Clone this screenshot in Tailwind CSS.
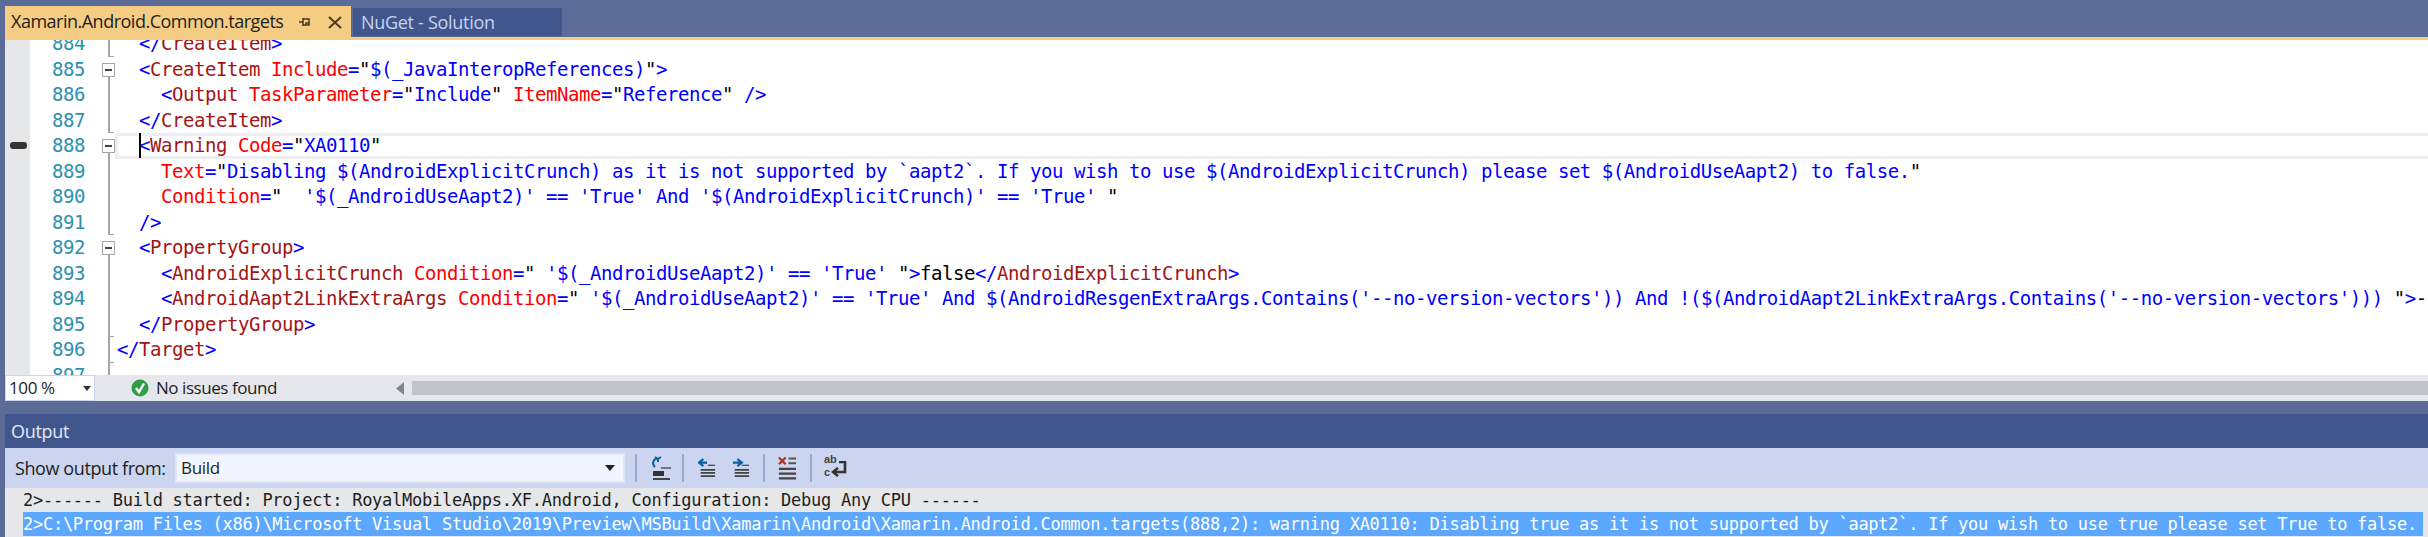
<!DOCTYPE html>
<html lang="en">
<head>
<meta charset="UTF-8">
<title>Xamarin.Android.Common.targets</title>
<script src="https://cdn.jsdelivr.net/npm/@tailwindcss/browser@4"></script>
</head>
<body class="bg-[#5d6b99]">
<div class="w-[2428px] h-[537px] overflow-hidden flex flex-col pl-[5px] font-['Open_Sans',sans-serif]">

  <!-- Tab well -->
  <div class="h-[37px] flex items-end shrink-0">
    <div class="w-[346px] h-[31px] bg-[#f5cc84] flex items-center pl-[6px] text-[18px] text-[#1e1e1e] tracking-[-0.5px] relative">
      <span>Xamarin.Android.Common.targets</span>
      <svg class="absolute left-[294px] top-[10px]" width="13" height="12" viewBox="0 0 13 12" fill="none" stroke="#4a3c1c" stroke-width="1.5">
        <path d="M0 6H4M4 2V10M4 3H10V9H4M7 9V7H10"/>
      </svg>
      <svg class="absolute left-[323px] top-[10px]" width="14" height="13" viewBox="0 0 14 13" stroke="#4a3c1c" stroke-width="2">
        <path d="M1 1L13 12M13 1L1 12"/>
      </svg>
    </div>
    <div class="ml-[2px] mb-px w-[209px] h-[28px] bg-[#40568d] flex items-center pl-[8px] text-[18px] text-[#c8d3ee] tracking-[-0.3px]">NuGet - Solution</div>
  </div>
  <div class="h-[3px] bg-[#f5cc84] shrink-0"></div>

  <!-- Editor -->
  <div class="h-[335px] bg-white overflow-hidden shrink-0 font-['DejaVu_Sans_Mono',monospace] text-[19px] tracking-[-0.44px]">
    <div class="mt-[-9px]">
      <div class="flex h-[25.5px] leading-[25.5px]">
        <div class="w-[25px] bg-[#e6e7e8]"></div><div class="w-[55px] text-right text-[#2b91af]">884</div>
        <div class="w-[32px]"><div class="ml-[23px] w-[6px] h-full border-l-2 border-b border-[#a5a5a5]"></div></div>
        <div class="whitespace-pre text-[#0000ff]">  &lt;/<span class="text-[#a31515]">CreateItem</span>&gt;</div>
      </div>
      <div class="flex h-[25.5px] leading-[25.5px]">
        <div class="w-[25px] bg-[#e6e7e8]"></div><div class="w-[55px] text-right text-[#2b91af]">885</div>
        <div class="w-[32px] flex flex-col"><div class="ml-[17px] mt-[6px] w-[13px] h-[14px] border border-[#a5a5a5] flex items-center justify-center"><div class="w-[7px] h-[2px] bg-[#444444]"></div></div><div class="ml-[23px] w-[2px] flex-1 bg-[#a5a5a5]"></div></div>
        <div class="whitespace-pre text-[#0000ff]">  &lt;<span class="text-[#a31515]">CreateItem</span> <span class="text-[#ff0000]">Include</span>=<span class="text-black">"</span>$(_JavaInteropReferences)<span class="text-black">"</span>&gt;</div>
      </div>
      <div class="flex h-[25.5px] leading-[25.5px]">
        <div class="w-[25px] bg-[#e6e7e8]"></div><div class="w-[55px] text-right text-[#2b91af]">886</div>
        <div class="w-[32px]"><div class="ml-[23px] w-[2px] h-full bg-[#a5a5a5]"></div></div>
        <div class="whitespace-pre text-[#0000ff]">    &lt;<span class="text-[#a31515]">Output</span> <span class="text-[#ff0000]">TaskParameter</span>=<span class="text-black">"</span>Include<span class="text-black">"</span> <span class="text-[#ff0000]">ItemName</span>=<span class="text-black">"</span>Reference<span class="text-black">"</span> /&gt;</div>
      </div>
      <div class="flex h-[25.5px] leading-[25.5px]">
        <div class="w-[25px] bg-[#e6e7e8]"></div><div class="w-[55px] text-right text-[#2b91af]">887</div>
        <div class="w-[32px]"><div class="ml-[23px] w-[6px] h-full border-l-2 border-b border-[#a5a5a5]"></div></div>
        <div class="whitespace-pre text-[#0000ff]">  &lt;/<span class="text-[#a31515]">CreateItem</span>&gt;</div>
      </div>
      <div class="flex h-[25.5px] leading-[25.5px] relative">
        <div class="w-[25px] bg-[#e6e7e8] flex items-center pl-[5px]"><div class="w-[17px] h-[7px] rounded-[3px] bg-[#333333]"></div></div><div class="w-[55px] text-right text-[#2b91af]">888</div>
        <div class="w-[32px] flex flex-col"><div class="ml-[17px] mt-[6px] w-[13px] h-[14px] border border-[#a5a5a5] flex items-center justify-center"><div class="w-[7px] h-[2px] bg-[#444444]"></div></div><div class="ml-[23px] w-[2px] flex-1 bg-[#a5a5a5]"></div></div>
        <div class="whitespace-pre text-[#0000ff]">  &lt;<span class="text-[#a31515]">Warning</span> <span class="text-[#ff0000]">Code</span>=<span class="text-black">"</span>XA0110<span class="text-black">"</span></div>
        <div class="absolute left-[110px] right-0 top-0 h-[26px] border-y-[3px] border-l-[3px] border-[#eeeef2]"></div>
        <div class="absolute left-[134px] top-0 h-[25px] w-[2px] bg-black"></div>
      </div>
      <div class="flex h-[25.5px] leading-[25.5px]">
        <div class="w-[25px] bg-[#e6e7e8]"></div><div class="w-[55px] text-right text-[#2b91af]">889</div>
        <div class="w-[32px]"><div class="ml-[23px] w-[2px] h-full bg-[#a5a5a5]"></div></div>
        <div class="whitespace-pre text-[#0000ff]">    <span class="text-[#ff0000]">Text</span>=<span class="text-black">"</span>Disabling $(AndroidExplicitCrunch) as it is not supported by `aapt2`. If you wish to use $(AndroidExplicitCrunch) please set $(AndroidUseAapt2) to false.<span class="text-black">"</span></div>
      </div>
      <div class="flex h-[25.5px] leading-[25.5px]">
        <div class="w-[25px] bg-[#e6e7e8]"></div><div class="w-[55px] text-right text-[#2b91af]">890</div>
        <div class="w-[32px]"><div class="ml-[23px] w-[2px] h-full bg-[#a5a5a5]"></div></div>
        <div class="whitespace-pre text-[#0000ff]">    <span class="text-[#ff0000]">Condition</span>=<span class="text-black">"</span>  '$(_AndroidUseAapt2)' == 'True' And '$(AndroidExplicitCrunch)' == 'True' <span class="text-black">"</span></div>
      </div>
      <div class="flex h-[25.5px] leading-[25.5px]">
        <div class="w-[25px] bg-[#e6e7e8]"></div><div class="w-[55px] text-right text-[#2b91af]">891</div>
        <div class="w-[32px]"><div class="ml-[23px] w-[6px] h-full border-l-2 border-b border-[#a5a5a5]"></div></div>
        <div class="whitespace-pre text-[#0000ff]">  /&gt;</div>
      </div>
      <div class="flex h-[25.5px] leading-[25.5px]">
        <div class="w-[25px] bg-[#e6e7e8]"></div><div class="w-[55px] text-right text-[#2b91af]">892</div>
        <div class="w-[32px] flex flex-col"><div class="ml-[17px] mt-[6px] w-[13px] h-[14px] border border-[#a5a5a5] flex items-center justify-center"><div class="w-[7px] h-[2px] bg-[#444444]"></div></div><div class="ml-[23px] w-[2px] flex-1 bg-[#a5a5a5]"></div></div>
        <div class="whitespace-pre text-[#0000ff]">  &lt;<span class="text-[#a31515]">PropertyGroup</span>&gt;</div>
      </div>
      <div class="flex h-[25.5px] leading-[25.5px]">
        <div class="w-[25px] bg-[#e6e7e8]"></div><div class="w-[55px] text-right text-[#2b91af]">893</div>
        <div class="w-[32px]"><div class="ml-[23px] w-[2px] h-full bg-[#a5a5a5]"></div></div>
        <div class="whitespace-pre text-[#0000ff]">    &lt;<span class="text-[#a31515]">AndroidExplicitCrunch</span> <span class="text-[#ff0000]">Condition</span>=<span class="text-black">"</span> '$(_AndroidUseAapt2)' == 'True' <span class="text-black">"</span>&gt;<span class="text-black">false</span>&lt;/<span class="text-[#a31515]">AndroidExplicitCrunch</span>&gt;</div>
      </div>
      <div class="flex h-[25.5px] leading-[25.5px]">
        <div class="w-[25px] bg-[#e6e7e8]"></div><div class="w-[55px] text-right text-[#2b91af]">894</div>
        <div class="w-[32px]"><div class="ml-[23px] w-[2px] h-full bg-[#a5a5a5]"></div></div>
        <div class="whitespace-pre text-[#0000ff]">    &lt;<span class="text-[#a31515]">AndroidAapt2LinkExtraArgs</span> <span class="text-[#ff0000]">Condition</span>=<span class="text-black">"</span> '$(_AndroidUseAapt2)' == 'True' And $(AndroidResgenExtraArgs.Contains('--no-version-vectors')) And !($(AndroidAapt2LinkExtraArgs.Contains('--no-version-vectors'))) <span class="text-black">"</span>&gt;<span class="text-black">-</span></div>
      </div>
      <div class="flex h-[25.5px] leading-[25.5px]">
        <div class="w-[25px] bg-[#e6e7e8]"></div><div class="w-[55px] text-right text-[#2b91af]">895</div>
        <div class="w-[32px]"><div class="ml-[23px] w-[6px] h-full border-l-2 border-b border-[#a5a5a5]"></div></div>
        <div class="whitespace-pre text-[#0000ff]">  &lt;/<span class="text-[#a31515]">PropertyGroup</span>&gt;</div>
      </div>
      <div class="flex h-[25.5px] leading-[25.5px]">
        <div class="w-[25px] bg-[#e6e7e8]"></div><div class="w-[55px] text-right text-[#2b91af]">896</div>
        <div class="w-[32px]"><div class="ml-[23px] w-[6px] h-full border-l-2 border-b border-[#a5a5a5]"></div></div>
        <div class="whitespace-pre text-[#0000ff]">&lt;/<span class="text-[#a31515]">Target</span>&gt;</div>
      </div>
      <div class="flex h-[25.5px] leading-[25.5px]">
        <div class="w-[25px] bg-[#e6e7e8]"></div><div class="w-[55px] text-right text-[#2b91af]">897</div>
        <div class="w-[32px]"><div class="ml-[23px] w-[2px] h-full bg-[#a5a5a5]"></div></div>
      </div>
    </div>
  </div>

  <!-- Editor status bar -->
  <div class="h-[26px] bg-[#e6e7ed] flex items-center shrink-0">
    <div class="w-[90px] h-full bg-white border border-[#ccd5f0] flex items-center pl-[3px] text-[17px] text-[#1e1e1e] tracking-[-0.4px]">
      <span>100 %</span>
      <svg class="ml-[28px]" width="8" height="5" viewBox="0 0 8 5" fill="#333333"><path d="M0 0H8L4 5Z"/></svg>
    </div>
    <svg class="ml-[36px]" width="18" height="18" viewBox="0 0 18 18">
      <circle cx="9" cy="9" r="8.5" fill="#2f9e44"/>
      <path d="M5 9L8 13L13 4.5" fill="none" stroke="white" stroke-width="2.4"/>
    </svg>
    <span class="ml-[7px] text-[17px] text-[#1e1e1e] tracking-[-0.45px]">No issues found</span>
    <svg class="ml-[119px]" width="8" height="13" viewBox="0 0 8 13" fill="#85858c"><path d="M8 0V13L0 6.5Z"/></svg>
    <div class="ml-[8px] flex-1 h-[14px] bg-[#c2c3c9]"></div>
  </div>

  <div class="h-[13px] shrink-0"></div>

  <!-- Output panel -->
  <div class="h-[34px] bg-[#40568d] flex items-center pl-[6px] text-[18px] text-[#e4e9f6] tracking-[-0.3px] shrink-0">Output</div>

  <div class="h-[40px] bg-[#ccd5f0] flex items-center pl-[10px] shrink-0">
    <span class="w-[160px] text-[18px] text-[#1e1e1e] tracking-[-0.4px]">Show output from:</span>
    <div class="w-[450px] h-[30px] bg-[#f2f5fd] border-2 border-[#dde5fb] flex items-center pl-[4px] text-[17px] text-[#1e1e1e] tracking-[-0.3px]">
      <span class="flex-1">Build</span>
      <svg class="mr-[8px]" width="10" height="6" viewBox="0 0 10 6" fill="#222222"><path d="M0 0H10L5 6Z"/></svg>
    </div>
    <div class="ml-[10px] w-[2px] h-[28px] bg-[#9aaad0]"></div>
    <svg class="ml-[13px]" width="22" height="24" viewBox="0 0 22 24" fill="none">
      <path d="M5 11C1 7 4 2 8 3L8 6M8 3L5 1M8 3L11 1" stroke="#0a5fa3" stroke-width="2"/>
      <path d="M11 12H21" stroke="#555555" stroke-width="1.5"/>
      <path d="M3 15H14V20H3Z" fill="#333333"/>
      <path d="M3 23H20" stroke="#444444" stroke-width="2"/>
    </svg>
    <div class="ml-[10px] w-[2px] h-[28px] bg-[#9aaad0]"></div>
    <svg class="ml-[14px]" width="18" height="20" viewBox="0 0 20 20" fill="none">
      <path d="M10 4H2M6 0L1 4L6 8" stroke="#0a5fa3" stroke-width="2.4"/>
      <path d="M11 7H19" stroke="#555555" stroke-width="1.5"/>
      <path d="M3 12H19M3 15.5H19M3 19H19" stroke="#444444" stroke-width="2"/>
    </svg>
    <svg class="ml-[16px]" width="18" height="20" viewBox="0 0 20 20" fill="none">
      <path d="M1 4H9M6 0L11 4L6 8" stroke="#0a5fa3" stroke-width="2.4"/>
      <path d="M11 7H19" stroke="#555555" stroke-width="1.5"/>
      <path d="M3 12H19M3 15.5H19M3 19H19" stroke="#444444" stroke-width="2"/>
    </svg>
    <div class="ml-[13px] w-[2px] h-[28px] bg-[#9aaad0]"></div>
    <svg class="ml-[13px]" width="19" height="24" viewBox="0 0 20 24" fill="none">
      <path d="M1 1L8 8M8 1L1 8" stroke="#b8301a" stroke-width="2.4"/>
      <path d="M11 2H19M11 7H19" stroke="#555555" stroke-width="2"/>
      <path d="M1 13H19M1 18H19M1 23H19" stroke="#444444" stroke-width="2.4"/>
    </svg>
    <div class="ml-[13px] w-[2px] h-[28px] bg-[#9aaad0]"></div>
    <div class="ml-[12px] w-[23px] h-[24px] relative">
      <span class="absolute left-0 top-[-3px] font-['Liberation_Sans',sans-serif] text-[11px] font-bold text-[#444444] leading-[13px]">ab<br>c</span>
      <svg class="absolute left-[7px] top-[5px]" width="16" height="16" viewBox="0 0 16 16" fill="none">
        <path d="M8 1H14V11H3M7 7L2 11L7 15" stroke="#333333" stroke-width="2.6"/>
      </svg>
    </div>
  </div>

  <div class="flex-1 bg-[#e6e7e8] font-['DejaVu_Sans_Mono',monospace] text-[17px] tracking-[-0.26px] text-[#1e1e1e] pl-[18px] pr-[5px] overflow-hidden">
    <div class="h-[24px] leading-[24px] whitespace-pre">2&gt;------ Build started: Project: RoyalMobileApps.XF.Android, Configuration: Debug Any CPU ------</div>
    <div class="h-[24px] leading-[24px] whitespace-pre bg-[#5ca8ff] text-white overflow-hidden">2&gt;C:\Program Files (x86)\Microsoft Visual Studio\2019\Preview\MSBuild\Xamarin\Android\Xamarin.Android.Common.targets(888,2): warning XA0110: Disabling true as it is not supported by `aapt2`. If you wish to use true please set True to false.</div>
  </div>
</div>
</body>
</html>
